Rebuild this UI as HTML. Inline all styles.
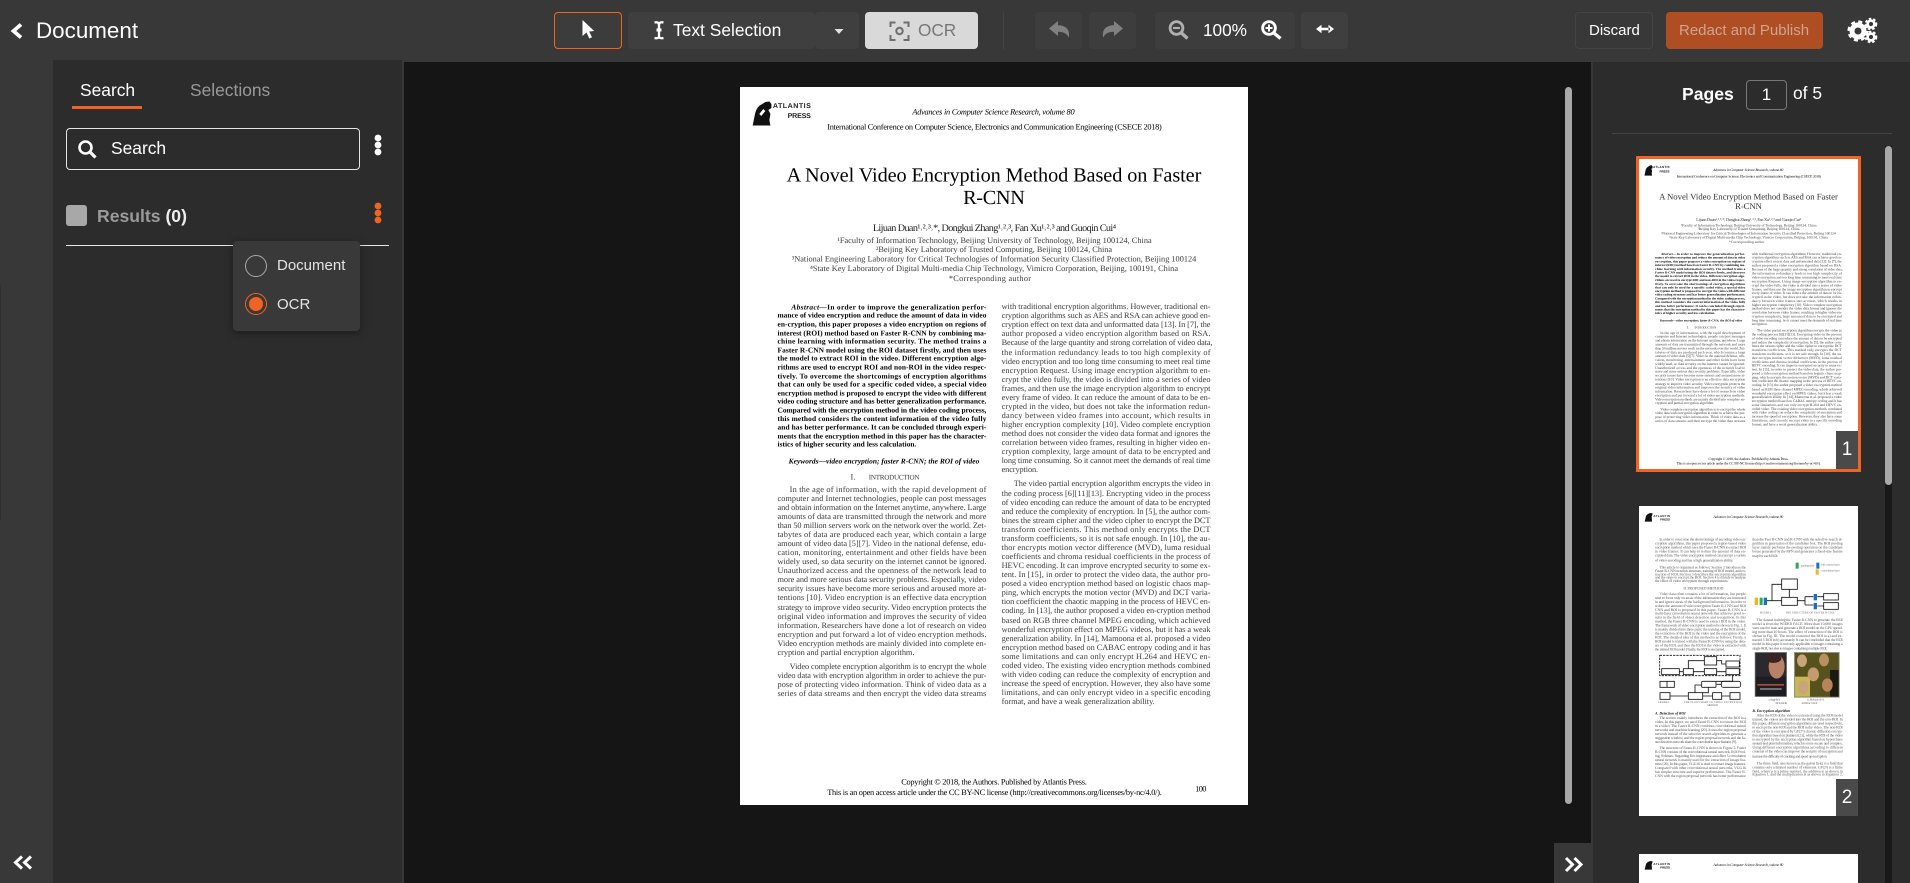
<!DOCTYPE html>
<html lang="en"><head><meta charset="utf-8"><title>Document</title>
<style>
html,body{margin:0;padding:0;width:1910px;height:883px;overflow:hidden;background:#383838;font-family:"Liberation Sans",Arial,sans-serif;color:#fff}
.a{position:absolute}
.t{position:absolute;white-space:nowrap;line-height:1}
.btn{position:absolute;top:12px;height:37px;background:#3f3f3f;border-radius:4px;box-sizing:border-box}
svg{position:absolute;left:0;top:0;overflow:visible}
.pg text{font-family:"Liberation Serif",serif;font-size:8.2px;fill:#3c3c3c;text-rendering:geometricPrecision}
.pg .b text{font-weight:bold;font-size:7.3px;fill:#000}
.pg text.k{fill:#000}
.pg text.s{font-family:"Liberation Sans",sans-serif;font-weight:bold;font-size:7px;fill:#222}
.pg2 text{font-family:"Liberation Serif",serif;font-size:11.5px;fill:#555;text-rendering:geometricPrecision}
.pg2 .n{fill:#222}
.pg2 .s{font-family:"Liberation Sans",sans-serif;font-weight:bold;font-size:9px;fill:#222}
.pg2 .h{font-weight:bold;font-style:italic;fill:#111}
.fig rect{fill:#fff;stroke:#111;stroke-width:2.5}
.fig path{fill:none;stroke:#111;stroke-width:2.5}
.thumb{position:absolute;left:1639px;width:219px;background:#fff;overflow:hidden}
.thumb svg{filter:blur(.3px)}
.main svg{filter:blur(.22px)}
.badge{position:absolute;left:1836px;width:22px;background:#4a4a4a;color:#fff;font-size:19px;text-align:center}
</style></head><body>

<!-- panels -->
<div class="a" style="left:53px;top:60px;width:349px;height:823px;background:#2c2c2c"></div>
<div class="a" style="left:404px;top:62px;width:1187px;height:821px;background:#151515"></div>
<div class="a" style="left:1593px;top:62px;width:317px;height:821px;background:#2c2c2c"></div>
<div class="a" style="left:0;top:285px;width:1px;height:235px;background:#303030"></div>

<!-- header left -->
<svg width="1910" height="883" style="z-index:3;pointer-events:none">
<polyline points="21,24.5 13.5,31 21,37.5" fill="none" stroke="#fff" stroke-width="3.8"/>
<!-- arrow pointer -->
<path d="M582.5 20V36L586.5 32.5L589.3 38.5L592 37.3L589.2 31.5L594.2 31Z" fill="#fff"/>
<!-- text cursor -->
<path d="M654.5 22.5Q659 21.5 659 25V36Q659 39 654.5 38M663.5 22.5Q659 21.5 659 25V36Q659 39 663.5 38" fill="none" stroke="#fff" stroke-width="2.3"/>
<rect x="656.5" y="28.5" width="5" height="3" fill="#fff"/>
<!-- caret -->
<path d="M834.5 29H843.5L839 34Z" fill="#e0e0e0"/>
<!-- ocr -->
<path d="M890.5 27V22.5H895.5M903.5 22.5H908.5V27M908.5 35V40H903.5M895.5 40H890.5V35" fill="none" stroke="#6e6e6e" stroke-width="2"/>
<circle cx="899.5" cy="31" r="3.2" fill="none" stroke="#6e6e6e" stroke-width="2"/>
<!-- undo / redo -->
<path d="M1049 28.5L1058 21V25.3C1066 25.3 1070.5 30 1068.7 37.6C1067 33.5 1063.5 31.6 1058 31.7V36Z" fill="#808080"/>
<path d="M1123 28.5L1114 21V25.3C1106 25.3 1101.5 30 1103.3 37.6C1105 33.5 1108.5 31.6 1114 31.7V36Z" fill="#808080"/>
<!-- zoom out/in -->
<circle cx="1176.5" cy="28" r="6.4" fill="none" stroke="#b0b0b0" stroke-width="2.8"/>
<path d="M1181.5 33L1187.5 38.5" stroke="#b0b0b0" stroke-width="3.4"/>
<path d="M1173 28H1180" stroke="#b0b0b0" stroke-width="2.2"/>
<circle cx="1269" cy="28" r="6.4" fill="none" stroke="#fff" stroke-width="2.8"/>
<path d="M1274 33L1280.5 38.5" stroke="#fff" stroke-width="3.4"/>
<path d="M1265.5 28H1272.5M1269 24.5V31.5" stroke="#fff" stroke-width="2"/>
<!-- fit -->
<path d="M1320 27.8H1330V30.2H1320Z M1316 29L1321.5 24.8V33.2Z M1334 29L1328.5 24.8V33.2Z" fill="#fff"/>
<!-- gears -->
<circle cx="1858" cy="31" r="6" fill="none" stroke="#fff" stroke-width="5"/>
<circle cx="1858" cy="31" r="9.3" fill="none" stroke="#fff" stroke-width="2.6" stroke-dasharray="4 3.3"/>
<circle cx="1871" cy="24" r="3.4" fill="none" stroke="#fff" stroke-width="2.6"/>
<circle cx="1871" cy="24" r="5.4" fill="none" stroke="#fff" stroke-width="1.8" stroke-dasharray="2.6 2"/>
<circle cx="1871" cy="37" r="3.4" fill="none" stroke="#fff" stroke-width="2.6"/>
<circle cx="1871" cy="37" r="5.4" fill="none" stroke="#fff" stroke-width="1.8" stroke-dasharray="2.6 2"/>
<!-- search icon -->
<circle cx="85.5" cy="147.5" r="6" fill="none" stroke="#fff" stroke-width="2.6"/>
<path d="M90 152L95.5 157.5" stroke="#fff" stroke-width="3.2"/>
<!-- kebabs -->
<circle cx="378" cy="138" r="3.4" fill="#fff"/><circle cx="378" cy="145" r="3.4" fill="#fff"/><circle cx="378" cy="152" r="3.4" fill="#fff"/>
<circle cx="378" cy="206" r="3.4" fill="#f26322"/><circle cx="378" cy="213" r="3.4" fill="#f26322"/><circle cx="378" cy="220" r="3.4" fill="#f26322"/>
<!-- bottom chevrons -->
<path d="M22 856.5L15.5 862.5L22 868.5M31 856.5L24.5 862.5L31 868.5" fill="none" stroke="#fff" stroke-width="3"/>
<path d="M1566 858L1572.5 864.5L1566 871M1574.5 858L1581 864.5L1574.5 871" fill="none" stroke="#fff" stroke-width="3"/>
</svg>

<div class="t" style="left:36px;top:20px;font-size:22.4px">Document</div>

<!-- toolbar -->
<div class="btn" style="left:554px;width:68px;border:1px solid #f26322;background:#3c3c3c"></div>
<div class="btn" style="left:628px;width:187px"></div>
<div class="t" style="left:673px;top:22px;font-size:17.4px">Text Selection</div>
<div class="btn" style="left:815px;width:44px"></div>
<div class="btn" style="left:865px;width:113px;background:#d9d9d9"></div>
<div class="t" style="left:918px;top:22px;font-size:17.2px;color:#777">OCR</div>
<div class="a" style="left:1003px;top:12px;width:1px;height:37px;background:#444"></div>
<div class="btn" style="left:1035px;width:47px;background:#3d3d3d"></div>
<div class="btn" style="left:1089px;width:47px;background:#3d3d3d"></div>
<div class="btn" style="left:1155px;width:140px;background:#3d3d3d"></div>
<div class="t" style="left:1203px;top:22px;font-size:17.2px">100%</div>
<div class="btn" style="left:1301px;width:47px"></div>
<div class="btn" style="left:1575px;width:78px;background:transparent;border:1px solid #444"></div>
<div class="t" style="left:1589px;top:23px;font-size:15px">Discard</div>
<div class="btn" style="left:1666px;width:157px;background:#ae4e22"></div>
<div class="t" style="left:1679px;top:23px;font-size:15px;color:#cda591">Redact and Publish</div>

<!-- left panel -->
<div class="t" style="left:80px;top:82px;font-size:17.4px">Search</div>
<div class="a" style="left:72px;top:106px;width:70px;height:3px;background:#f26322"></div>
<div class="t" style="left:190px;top:82px;font-size:17.4px;color:#999">Selections</div>
<div class="a" style="left:66px;top:128px;width:294px;height:42px;box-sizing:border-box;border:1px solid #e4e4e4;border-radius:4px"></div>
<div class="t" style="left:111px;top:140px;font-size:17.4px">Search</div>
<div class="a" style="left:66px;top:205px;width:21px;height:21px;background:#a8a8a8;border-radius:3px"></div>
<div class="t" style="left:97px;top:208px;font-size:17.6px;font-weight:bold;color:#9a9a9a">Results <span style="color:#eee">(0)</span></div>
<div class="a" style="left:66px;top:245px;width:323px;height:1px;background:#e6e6e6"></div>
<div class="a" style="left:233px;top:241px;width:127px;height:90px;background:#393939;border-radius:4px;box-shadow:0 2px 8px rgba(0,0,0,.4)"></div>
<div class="a" style="left:245px;top:255px;width:22px;height:22px;box-sizing:border-box;border:1.5px solid #aaa;border-radius:50%"></div>
<div class="t" style="left:277px;top:258px;font-size:15px;color:#e4e4e4">Document</div>
<div class="a" style="left:245px;top:293px;width:22px;height:22px;box-sizing:border-box;border:1.5px solid #f26322;border-radius:50%"></div>
<div class="a" style="left:249px;top:297px;width:14px;height:14px;background:#f26322;border-radius:50%"></div>
<div class="t" style="left:277px;top:297px;font-size:15px;color:#e4e4e4">OCR</div>

<!-- main -->
<div class="a" style="left:1565px;top:87px;width:7px;height:717px;background:#a8a8a8;border-radius:4px"></div>
<div class="a" style="left:1554px;top:843px;width:37px;height:40px;background:#383838"></div>

<div class="a pg main" style="left:740px;top:87px;width:508px;height:718px;background:#fff;overflow:hidden">
<svg width="508" height="718" viewBox="740 87 501 718" preserveAspectRatio="none">
<path d="M752.5 125.5L755 113Q757 106 762 104L765 102L769 101.5L771 104L771 108L768 110L770 114L769 120L770 125.5Z" fill="#111"/>
<path d="M759 114L763 109L765 111L761 116Z" fill="#fff"/>
<text class="s" x="772.4" y="108.2" textLength="37.5">ATLANTIS</text>
<text class="s" x="787" y="118" textLength="22.9">PRESS</text>
<text class="k" x="910" y="114.5" textLength="160" font-style="italic">Advances in Computer Science Research, volume 80</text>
<text class="k" x="826" y="129.5" textLength="330">International Conference on Computer Science, Electronics and Communication Engineering (CSECE 2018)</text>
<text class="k" x="786" y="181.5" textLength="409" style="font-size:20px">A Novel Video Encryption Method Based on Faster</text>
<text class="k" x="960" y="204" textLength="61" style="font-size:20px">R-CNN</text>
<text x="871" y="231" textLength="240" style="font-size:10px;fill:#222">Lijuan Duan¹˒²˒³˒*, Dongkui Zhang¹˒²˒³, Fan Xu¹˒²˒³ and Guoqin Cui⁴</text>
<g style="fill:#555">
<text x="836" y="243" textLength="310">¹Faculty of Information Technology, Beijing University of Technology, Beijing 100124, China</text>
<text x="874" y="252" textLength="233">²Beijing Key Laboratory of Trusted Computing, Beijing 100124, China</text>
<text x="791" y="261.7" textLength="399">³National Engineering Laboratory for Critical Technologies of Information Security Classified Protection, Beijing 100124</text>
<text x="809" y="271" textLength="363">⁴State Key Laboratory of Digital Multi-media Chip Technology, Vimicro Corporation, Beijing, 100191, China</text>
<text x="946" y="281" textLength="81">*Corresponding author</text>
</g>
<g class="b">
<text x="790.7" y="309.3" textLength="192.3"><tspan font-style="italic">Abstract—</tspan>In order to improve the generalization perfor-</text>
<text x="777" y="317.6" textLength="206">mance of video encryption and reduce the amount of data in video</text>
<text x="777" y="326.3" textLength="206">en-cryption, this paper proposes a video encryption on regions of</text>
<text x="777" y="335.3" textLength="206">interest (ROI) method based on Faster R-CNN by combining ma-</text>
<text x="777" y="343.6" textLength="206">chine learning with information security. The method trains a</text>
<text x="777" y="352.3" textLength="206">Faster R-CNN model using the ROI dataset firstly, and then uses</text>
<text x="777" y="360.6" textLength="206">the model to extract ROI in the video. Different encryption algo-</text>
<text x="777" y="369.3" textLength="206">rithms are used to encrypt ROI and non-ROI in the video respec-</text>
<text x="777" y="378.3" textLength="206">tively. To overcome the shortcomings of encryption algorithms</text>
<text x="777" y="386.6" textLength="206">that can only be used for a specific coded video, a special video</text>
<text x="777" y="395.3" textLength="206">encryption method is proposed to encrypt the video with different</text>
<text x="777" y="403.6" textLength="206">video coding structure and has better generalization performance.</text>
<text x="777" y="412.3" textLength="206">Compared with the encryption method in the video coding process,</text>
<text x="777" y="420.9" textLength="206">this method considers the content information of the video fully</text>
<text x="777" y="429.3" textLength="206">and has better performance. It can be concluded through experi-</text>
<text x="777" y="438.3" textLength="206">ments that the encryption method in this paper has the character-</text>
<text x="777" y="446.3" textLength="137">istics of higher security and less calculation.</text>
<text x="788" y="463.3" textLength="188" font-style="italic">Keywords—video encryption; faster R-CNN; the ROI of video</text>
</g>
<text x="849" y="479.3" textLength="5">I.</text>
<text x="867" y="479.3" textLength="50" style="font-size:7px">INTRODUCTION</text>
<text x="789" y="492" textLength="194">In the age of information, with the rapid development of</text>
<text x="777" y="501" textLength="206">computer and Internet technologies, people can post messages</text>
<text x="777" y="510" textLength="206">and obtain information on the Internet anytime, anywhere. Large</text>
<text x="777" y="519" textLength="206">amounts of data are transmitted through the network and more</text>
<text x="777" y="528" textLength="206">than 50 million servers work on the network over the world. Zet-</text>
<text x="777" y="537" textLength="206">tabytes of data are produced each year, which contain a large</text>
<text x="777" y="546" textLength="206">amount of video data [5][7]. Video in the national defense, edu-</text>
<text x="777" y="555" textLength="206">cation, monitoring, entertainment and other fields have been</text>
<text x="777" y="564" textLength="206">widely used, so data security on the internet cannot be ignored.</text>
<text x="777" y="573" textLength="206">Unauthorized access and the openness of the network lead to</text>
<text x="777" y="582" textLength="206">more and more serious data security problems. Especially, video</text>
<text x="777" y="591" textLength="206">security issues have become more serious and aroused more at-</text>
<text x="777" y="600" textLength="206">tentions [10]. Video encryption is an effective data encryption</text>
<text x="777" y="610" textLength="206">strategy to improve video security. Video encryption protects the</text>
<text x="777" y="619" textLength="206">original video information and improves the security of video</text>
<text x="777" y="628" textLength="206">information. Researchers have done a lot of research on video</text>
<text x="777" y="637" textLength="206">encryption and put forward a lot of video encryption methods.</text>
<text x="777" y="646" textLength="206">Video encryption methods are mainly divided into complete en-</text>
<text x="777" y="655" textLength="135">cryption and partial encryption algorithm.</text>
<text x="789" y="669" textLength="194">Video complete encryption algorithm is to encrypt the whole</text>
<text x="777" y="678" textLength="206">video data with encryption algorithm in order to achieve the pur-</text>
<text x="777" y="687" textLength="206">pose of protecting video information. Think of video data as a</text>
<text x="777" y="696" textLength="206">series of data streams and then encrypt the video data streams</text>
<text x="998" y="309" textLength="206">with traditional encryption algorithms. However, traditional en-</text>
<text x="998" y="318" textLength="206">cryption algorithms such as AES and RSA can achieve good en-</text>
<text x="998" y="327" textLength="206">cryption effect on text data and unformatted data [13]. In [7], the</text>
<text x="998" y="336" textLength="206">author proposed a video encryption algorithm based on RSA.</text>
<text x="998" y="345" textLength="208">Because of the large quantity and strong correlation of video data,</text>
<text x="998" y="355" textLength="206">the information redundancy leads to too high complexity of</text>
<text x="998" y="364" textLength="206">video encryption and too long time consuming to meet real time</text>
<text x="998" y="373" textLength="206">encryption Request. Using image encryption algorithm to en-</text>
<text x="998" y="382" textLength="206">crypt the video fully, the video is divided into a series of video</text>
<text x="998" y="391" textLength="206">frames, and then use the image encryption algorithm to encrypt</text>
<text x="998" y="400" textLength="206">every frame of video. It can reduce the amount of data to be en-</text>
<text x="998" y="409" textLength="206">crypted in the video, but does not take the information redun-</text>
<text x="998" y="418" textLength="206">dancy between video frames into account, which results in</text>
<text x="998" y="427" textLength="206">higher encryption complexity [10]. Video complete encryption</text>
<text x="998" y="436" textLength="206">method does not consider the video data format and ignores the</text>
<text x="998" y="445" textLength="206">correlation between video frames, resulting in higher video en-</text>
<text x="998" y="454" textLength="206">cryption complexity, large amount of data to be encrypted and</text>
<text x="998" y="463" textLength="206">long time consuming. So it cannot meet the demands of real time</text>
<text x="998" y="472" textLength="36">encryption.</text>
<text x="1010" y="486" textLength="194">The video partial encryption algorithm encrypts the video in</text>
<text x="998" y="496" textLength="206">the coding process [6][11][13]. Encrypting video in the process</text>
<text x="998" y="505" textLength="206">of video encoding can reduce the amount of data to be encrypted</text>
<text x="998" y="514" textLength="206">and reduce the complexity of encryption. In [5], the author com-</text>
<text x="998" y="523" textLength="206">bines the stream cipher and the video cipher to encrypt the DCT</text>
<text x="998" y="532" textLength="206">transform coefficients. This method only encrypts the DCT</text>
<text x="998" y="541" textLength="206">transform coefficients, so it is not safe enough. In [10], the au-</text>
<text x="998" y="550" textLength="206">thor encrypts motion vector difference (MVD), luma residual</text>
<text x="998" y="559" textLength="206">coefficients and chroma residual coefficients in the process of</text>
<text x="998" y="568" textLength="206">HEVC encoding. It can improve encrypted security to some ex-</text>
<text x="998" y="577" textLength="206">tent. In [15], in order to protect the video data, the author pro-</text>
<text x="998" y="586" textLength="206">posed a video encryption method based on logistic chaos map-</text>
<text x="998" y="595" textLength="206">ping, which encrypts the motion vector (MVD) and DCT varia-</text>
<text x="998" y="604" textLength="206">tion coefficient the chaotic mapping in the process of HEVC en-</text>
<text x="998" y="613" textLength="206">coding. In [13], the author proposed a video en-cryption method</text>
<text x="998" y="623" textLength="206">based on RGB three channel MPEG encoding, which achieved</text>
<text x="998" y="632" textLength="206">wonderful encryption effect on MPEG videos, but it has a weak</text>
<text x="998" y="641" textLength="206">generalization ability. In [14], Mamoona et al. proposed a video</text>
<text x="998" y="650" textLength="206">encryption method based on CABAC entropy coding and it has</text>
<text x="998" y="659" textLength="206">some limitations and can only encrypt H.264 and HEVC en-</text>
<text x="998" y="668" textLength="206">coded video. The existing video encryption methods combined</text>
<text x="998" y="677" textLength="206">with video coding can reduce the complexity of encryption and</text>
<text x="998" y="686" textLength="206">increase the speed of encryption. However, they also have some</text>
<text x="998" y="695" textLength="206">limitations, and can only encrypt video in a specific encoding</text>
<text x="998" y="704" textLength="151">format, and have a weak generalization ability.</text>
<text class="k" x="899" y="784.7" textLength="183">Copyright © 2018, the Authors. Published by Atlantis Press.</text>
<text class="k" x="826" y="795" textLength="330">This is an open access article under the CC BY-NC license (http://creativecommons.org/licenses/by-nc/4.0/).</text>
<text class="k" x="1189" y="791.7" textLength="11">100</text>
</svg>
</div>

<!-- right panel -->
<div class="t" style="left:1682px;top:86px;font-size:17.6px;font-weight:bold">Pages</div>
<div class="a" style="left:1746px;top:80px;width:41px;height:30px;box-sizing:border-box;border:1px solid #777;border-radius:4px;text-align:center;font-size:17px;line-height:28px">1</div>
<div class="t" style="left:1793px;top:85px;font-size:17.4px">of 5</div>
<div class="a" style="left:1612px;top:133px;width:280px;height:1px;background:#444"></div>
<div class="a" style="left:1885px;top:146px;width:7px;height:737px;background:#181818"></div>
<div class="a" style="left:1885px;top:146px;width:7px;height:339px;background:#a8a8a8;border-radius:4px"></div>

<div class="a" style="left:1636px;top:156px;width:225px;height:316px;background:#f26322"></div>
<div class="thumb pg" style="top:159px;height:310px">
<svg width="219" height="310" viewBox="740 87 501 718" preserveAspectRatio="none">
<path d="M752.5 125.5L755 113Q757 106 762 104L765 102L769 101.5L771 104L771 108L768 110L770 114L769 120L770 125.5Z" fill="#111"/>
<text class="s" x="772.4" y="108.2" textLength="37.5">ATLANTIS</text>
<text class="s" x="787" y="118" textLength="22.9">PRESS</text>
<text class="k" x="910" y="114.5" textLength="160" font-style="italic">Advances in Computer Science Research, volume 80</text>
<text class="k" x="826" y="129.5" textLength="330">International Conference on Computer Science, Electronics and Communication Engineering (CSECE 2018)</text>
<text x="786" y="181" textLength="409" style="font-size:20px;fill:#333">A Novel Video Encryption Method Based on Faster</text>
<text x="960" y="203" textLength="61" style="font-size:20px;fill:#333">R-CNN</text>
<text x="871" y="231" textLength="240" style="font-size:10px">Lijuan Duan¹˒²˒³˒*, Dongkui Zhang¹˒²˒³, Fan Xu¹˒²˒³ and Guoqin Cui⁴</text>
<g style="fill:#555">
<text x="836" y="243" textLength="310">¹Faculty of Information Technology, Beijing University of Technology, Beijing 100124, China</text>
<text x="874" y="252" textLength="233">²Beijing Key Laboratory of Trusted Computing, Beijing 100124, China</text>
<text x="791" y="261.7" textLength="399">³National Engineering Laboratory for Critical Technologies of Information Security Classified Protection, Beijing 100124</text>
<text x="809" y="271" textLength="363">⁴State Key Laboratory of Digital Multi-media Chip Technology, Vimicro Corporation, Beijing, 100191, China</text>
<text x="946" y="281" textLength="81">*Corresponding author</text>
</g>
<g class="b">
<text x="790.7" y="309.3" textLength="192.3"><tspan font-style="italic">Abstract—</tspan>In order to improve the generalization perfor-</text>
<text x="777" y="317.6" textLength="206">mance of video encryption and reduce the amount of data in video</text>
<text x="777" y="326.3" textLength="206">en-cryption, this paper proposes a video encryption on regions of</text>
<text x="777" y="335.3" textLength="206">interest (ROI) method based on Faster R-CNN by combining ma-</text>
<text x="777" y="343.6" textLength="206">chine learning with information security. The method trains a</text>
<text x="777" y="352.3" textLength="206">Faster R-CNN model using the ROI dataset firstly, and then uses</text>
<text x="777" y="360.6" textLength="206">the model to extract ROI in the video. Different encryption algo-</text>
<text x="777" y="369.3" textLength="206">rithms are used to encrypt ROI and non-ROI in the video respec-</text>
<text x="777" y="378.3" textLength="206">tively. To overcome the shortcomings of encryption algorithms</text>
<text x="777" y="386.6" textLength="206">that can only be used for a specific coded video, a special video</text>
<text x="777" y="395.3" textLength="206">encryption method is proposed to encrypt the video with different</text>
<text x="777" y="403.6" textLength="206">video coding structure and has better generalization performance.</text>
<text x="777" y="412.3" textLength="206">Compared with the encryption method in the video coding process,</text>
<text x="777" y="420.9" textLength="206">this method considers the content information of the video fully</text>
<text x="777" y="429.3" textLength="206">and has better performance. It can be concluded through experi-</text>
<text x="777" y="438.3" textLength="206">ments that the encryption method in this paper has the character-</text>
<text x="777" y="446.3" textLength="137">istics of higher security and less calculation.</text>
<text x="788" y="463.3" textLength="188" font-style="italic">Keywords—video encryption; faster R-CNN; the ROI of video</text>
</g>
<text x="849" y="479.3" textLength="5">I.</text>
<text x="867" y="479.3" textLength="50" style="font-size:7px">INTRODUCTION</text>
<text x="789" y="492" textLength="194">In the age of information, with the rapid development of</text>
<text x="777" y="501" textLength="206">computer and Internet technologies, people can post messages</text>
<text x="777" y="510" textLength="206">and obtain information on the Internet anytime, anywhere. Large</text>
<text x="777" y="519" textLength="206">amounts of data are transmitted through the network and more</text>
<text x="777" y="528" textLength="206">than 50 million servers work on the network over the world. Zet-</text>
<text x="777" y="537" textLength="206">tabytes of data are produced each year, which contain a large</text>
<text x="777" y="546" textLength="206">amount of video data [5][7]. Video in the national defense, edu-</text>
<text x="777" y="555" textLength="206">cation, monitoring, entertainment and other fields have been</text>
<text x="777" y="564" textLength="206">widely used, so data security on the internet cannot be ignored.</text>
<text x="777" y="573" textLength="206">Unauthorized access and the openness of the network lead to</text>
<text x="777" y="582" textLength="206">more and more serious data security problems. Especially, video</text>
<text x="777" y="591" textLength="206">security issues have become more serious and aroused more at-</text>
<text x="777" y="600" textLength="206">tentions [10]. Video encryption is an effective data encryption</text>
<text x="777" y="610" textLength="206">strategy to improve video security. Video encryption protects the</text>
<text x="777" y="619" textLength="206">original video information and improves the security of video</text>
<text x="777" y="628" textLength="206">information. Researchers have done a lot of research on video</text>
<text x="777" y="637" textLength="206">encryption and put forward a lot of video encryption methods.</text>
<text x="777" y="646" textLength="206">Video encryption methods are mainly divided into complete en-</text>
<text x="777" y="655" textLength="135">cryption and partial encryption algorithm.</text>
<text x="789" y="669" textLength="194">Video complete encryption algorithm is to encrypt the whole</text>
<text x="777" y="678" textLength="206">video data with encryption algorithm in order to achieve the pur-</text>
<text x="777" y="687" textLength="206">pose of protecting video information. Think of video data as a</text>
<text x="777" y="696" textLength="206">series of data streams and then encrypt the video data streams</text>
<text x="998" y="309" textLength="206">with traditional encryption algorithms. However, traditional en-</text>
<text x="998" y="318" textLength="206">cryption algorithms such as AES and RSA can achieve good en-</text>
<text x="998" y="327" textLength="206">cryption effect on text data and unformatted data [13]. In [7], the</text>
<text x="998" y="336" textLength="206">author proposed a video encryption algorithm based on RSA.</text>
<text x="998" y="345" textLength="208">Because of the large quantity and strong correlation of video data,</text>
<text x="998" y="355" textLength="206">the information redundancy leads to too high complexity of</text>
<text x="998" y="364" textLength="206">video encryption and too long time consuming to meet real time</text>
<text x="998" y="373" textLength="206">encryption Request. Using image encryption algorithm to en-</text>
<text x="998" y="382" textLength="206">crypt the video fully, the video is divided into a series of video</text>
<text x="998" y="391" textLength="206">frames, and then use the image encryption algorithm to encrypt</text>
<text x="998" y="400" textLength="206">every frame of video. It can reduce the amount of data to be en-</text>
<text x="998" y="409" textLength="206">crypted in the video, but does not take the information redun-</text>
<text x="998" y="418" textLength="206">dancy between video frames into account, which results in</text>
<text x="998" y="427" textLength="206">higher encryption complexity [10]. Video complete encryption</text>
<text x="998" y="436" textLength="206">method does not consider the video data format and ignores the</text>
<text x="998" y="445" textLength="206">correlation between video frames, resulting in higher video en-</text>
<text x="998" y="454" textLength="206">cryption complexity, large amount of data to be encrypted and</text>
<text x="998" y="463" textLength="206">long time consuming. So it cannot meet the demands of real time</text>
<text x="998" y="472" textLength="36">encryption.</text>
<text x="1010" y="486" textLength="194">The video partial encryption algorithm encrypts the video in</text>
<text x="998" y="496" textLength="206">the coding process [6][11][13]. Encrypting video in the process</text>
<text x="998" y="505" textLength="206">of video encoding can reduce the amount of data to be encrypted</text>
<text x="998" y="514" textLength="206">and reduce the complexity of encryption. In [5], the author com-</text>
<text x="998" y="523" textLength="206">bines the stream cipher and the video cipher to encrypt the DCT</text>
<text x="998" y="532" textLength="206">transform coefficients. This method only encrypts the DCT</text>
<text x="998" y="541" textLength="206">transform coefficients, so it is not safe enough. In [10], the au-</text>
<text x="998" y="550" textLength="206">thor encrypts motion vector difference (MVD), luma residual</text>
<text x="998" y="559" textLength="206">coefficients and chroma residual coefficients in the process of</text>
<text x="998" y="568" textLength="206">HEVC encoding. It can improve encrypted security to some ex-</text>
<text x="998" y="577" textLength="206">tent. In [15], in order to protect the video data, the author pro-</text>
<text x="998" y="586" textLength="206">posed a video encryption method based on logistic chaos map-</text>
<text x="998" y="595" textLength="206">ping, which encrypts the motion vector (MVD) and DCT varia-</text>
<text x="998" y="604" textLength="206">tion coefficient the chaotic mapping in the process of HEVC en-</text>
<text x="998" y="613" textLength="206">coding. In [13], the author proposed a video en-cryption method</text>
<text x="998" y="623" textLength="206">based on RGB three channel MPEG encoding, which achieved</text>
<text x="998" y="632" textLength="206">wonderful encryption effect on MPEG videos, but it has a weak</text>
<text x="998" y="641" textLength="206">generalization ability. In [14], Mamoona et al. proposed a video</text>
<text x="998" y="650" textLength="206">encryption method based on CABAC entropy coding and it has</text>
<text x="998" y="659" textLength="206">some limitations and can only encrypt H.264 and HEVC en-</text>
<text x="998" y="668" textLength="206">coded video. The existing video encryption methods combined</text>
<text x="998" y="677" textLength="206">with video coding can reduce the complexity of encryption and</text>
<text x="998" y="686" textLength="206">increase the speed of encryption. However, they also have some</text>
<text x="998" y="695" textLength="206">limitations, and can only encrypt video in a specific encoding</text>
<text x="998" y="704" textLength="151">format, and have a weak generalization ability.</text>
<text class="k" x="899" y="784.7" textLength="183">Copyright © 2018, the Authors. Published by Atlantis Press.</text>
<text class="k" x="826" y="795" textLength="330">This is an open access article under the CC BY-NC license (http://creativecommons.org/licenses/by-nc/4.0/).</text>
</svg>
</div>
<div class="badge" style="top:431px;height:38px;line-height:38px">1</div>

<div class="thumb pg2" style="top:506px;height:310px">
<svg width="219" height="310" viewBox="57 48 657 930" preserveAspectRatio="none">
<path d="M74 95L78 78Q82 71 92 69L98 70L95 80L96 95Z" fill="#111"/>
<text class="s" x="100" y="81" textLength="50">ATLANTIS</text>
<text class="s" x="120" y="92" textLength="30">PRESS</text>
<text class="n" x="280" y="84" textLength="210" font-style="italic">Advances in Computer Science Research, volume 80</text>

<text x="118" y="151" textLength="260">In order to overcome the shortcomings of encoding video en-</text>
<text x="105" y="163" textLength="273">cryption algorithms, this paper proposed a region-based video</text>
<text x="105" y="175" textLength="273">encryption method which uses the Faster R-CNN to extract ROI</text>
<text x="105" y="187" textLength="273">in video frames. It can help to reduce the amount of data en-</text>
<text x="105" y="199" textLength="273">crypted data. The video encryption method can encrypt a variety</text>
<text x="105" y="214" textLength="235">of video encoding and has a high generalization ability.</text>
<text x="118" y="236" textLength="260">This article is organized as follows: Section 2 introduces the</text>
<text x="105" y="246" textLength="273">Faster R-CNN network structure, training of ROI model, and ex-</text>
<text x="105" y="256" textLength="273">traction of ROI. Section 3 describes the encryption algorithm</text>
<text x="105" y="266" textLength="273">and the steps to encrypt the ROI. Section 4 is mainly to analyze</text>
<text x="105" y="276" textLength="220">the effect of video encryption through experiments.</text>
<text x="190" y="299" textLength="120">II.   PROPOSED METHOD</text>
<text x="118" y="315" textLength="260">Video data often contains a lot of information, but people</text>
<text x="105" y="327" textLength="273">tend to focus only on areas of the information they are interested</text>
<text x="105" y="339" textLength="273">in and ignore areas of the background information. In order to</text>
<text x="105" y="351" textLength="273">reduce the amount of video encryption Faster R-CNN and ROI</text>
<text x="105" y="363" textLength="273">CNN and ROI is proposed in this paper. Faster R-CNN is a</text>
<text x="105" y="374" textLength="273">multi-layer convolution neural network that achieves good re-</text>
<text x="105" y="386" textLength="273">sults in the field of object detection and recognition. In this</text>
<text x="105" y="398" textLength="273">method, the Faster R-CNN is used to extract ROI in the video.</text>
<text x="105" y="410" textLength="273">The framework of video encryption method is shown in Fig. 1. It</text>
<text x="105" y="422" textLength="273">is mainly divided into three parts: the training of the ROI model,</text>
<text x="105" y="434" textLength="273">the extraction of the ROI in the video and the encryption of the</text>
<text x="105" y="446" textLength="273">ROI. The detailed idea of this method is as follows: Firstly, a</text>
<text x="105" y="458" textLength="273">ROI model is trained with the Faster R-CNN by using the data-</text>
<text x="105" y="470" textLength="273">set of the ROI, and then the ROI in the video is extracted with</text>
<text x="105" y="482" textLength="210">the trained ROI model. Finally, the ROI is encrypted.</text>

<g class="fig">
<path d="M119 496H360V557H119Z" stroke-dasharray="7 3"/>
<rect x="125" y="536" width="53" height="18"/><rect x="190" y="536" width="30" height="18"/>
<rect x="253" y="500" width="37" height="25"/><rect x="253" y="536" width="37" height="18"/>
<rect x="318" y="513" width="40" height="18"/><rect x="318" y="536" width="40" height="18"/>
<rect x="120" y="574" width="43" height="18"/><rect x="245" y="574" width="43" height="18" rx="3"/>
<rect x="304" y="574" width="58" height="18" rx="6"/>
<rect x="120" y="608" width="30" height="20"/><rect x="205" y="608" width="43" height="20"/>
<rect x="278" y="608" width="27" height="20"/><rect x="330" y="608" width="30" height="20"/>
<path d="M178 545H190M220 545H253M205 536V512H253M290 545H318M290 512H305V522H318M338 554V574H288M265 592V608H248M150 618H205M248 618H278M305 618H330M225 608V585H245M290 583H304M141 592V574"/>
</g>
<text x="115" y="639" textLength="35" style="font-size:8px">FIGURE 1.</text>
<text x="192" y="639" textLength="175" style="font-size:8px">THE FLOWCHART OF VIDEO ENCRYPTION</text>
<text x="262" y="648" textLength="32" style="font-size:8px">METHOD</text>
<text class="h" x="105" y="673" textLength="92">A. Detection of ROI</text>
<text x="118" y="687" textLength="260">The section mainly introduces the extraction of the ROI in a</text>
<text x="105" y="699" textLength="273">video. In this paper, we used Faster R-CNN to extract the ROI</text>
<text x="105" y="711" textLength="273">in a video. The Faster R-CNN combines convolutional neural</text>
<text x="105" y="723" textLength="273">networks and machine learning [20]. It uses the region proposal</text>
<text x="105" y="735" textLength="273">network instead of the selective search algorithm to generate a</text>
<text x="105" y="747" textLength="273">suggestion window, and the region proposal network and the fa-</text>
<text x="105" y="759" textLength="245">ster detection network share the convolution layer features [9].</text>
<text x="118" y="777" textLength="260">The structure of Faster R-CNN is shown in Figure 2. Faster</text>
<text x="105" y="789" textLength="273">R-CNN consists of the convolutional neural network, ROI Pool-</text>
<text x="105" y="801" textLength="273">ing, Softmax. Regarding five importance and effect 5 convolution</text>
<text x="105" y="813" textLength="273">neural network is mainly used for the extraction of image fea-</text>
<text x="105" y="825" textLength="273">tures [20]. In this paper, VGG16 is used to extract image features.</text>
<text x="105" y="837" textLength="273">Compared with other convolutional neural networks, VGG16</text>
<text x="105" y="849" textLength="273">has simpler structure and superior performance. The Faster R-</text>
<text x="105" y="861" textLength="273">CNN with the region proposal network has better performance</text>

<text x="397" y="151" textLength="271">than the Fast R-CNN and R-CNN with the selective search al-</text>
<text x="397" y="163" textLength="271">gorithm in generation of the candidate box. The ROI pooling</text>
<text x="397" y="175" textLength="271">layer mainly performs the pooling operation on the candidate</text>
<text x="397" y="187" textLength="271">boxes generated by the RPN and generates a fixed-size feature</text>
<text x="397" y="201" textLength="78">map for each ROI.</text>

<rect x="527" y="218" width="9" height="18" fill="#2eaa55"/>
<text x="543" y="229" textLength="40" style="font-size:8px">pooling layer</text>
<rect x="589" y="218" width="9" height="18" fill="#1670c8"/>
<text x="604" y="226" textLength="55" style="font-size:8px">full connect layer</text>
<rect x="587" y="238" width="9" height="16" fill="#f2b61c"/>
<text x="604" y="245" textLength="55" style="font-size:8px">convolution layer</text>
<g class="fig">
<rect x="485" y="267" width="47" height="31"/><rect x="485" y="322" width="47" height="24"/>
<rect x="611" y="311" width="44" height="19"/><rect x="611" y="338" width="44" height="20"/>
<path d="M440 332H485M456 332V283H485M508 298V322M532 332H555M555 320V345M555 320H580M555 345H580M592 320H611M592 348H611" stroke-width="3"/>
</g>
<rect x="404" y="323" width="10" height="22" fill="#f2b61c"/><rect x="419" y="323" width="9" height="22" fill="#2eaa55"/><rect x="431" y="323" width="10" height="22" fill="#1670c8"/>
<rect x="581" y="312" width="10" height="19" fill="#1670c8"/><rect x="581" y="339" width="10" height="19" fill="#1670c8"/>
<text x="420" y="371" textLength="35" style="font-size:8px">FIGURE 2.</text>
<text x="497" y="371" textLength="145" style="font-size:8px">THE STRUCTURE OF FASTER R-CNN</text>

<text x="410" y="393" textLength="258">The dataset training the Faster R-CNN to generate the ROI</text>
<text x="397" y="405" textLength="271">model is from the WIDER FACE. More than 10,000 images</text>
<text x="397" y="417" textLength="271">were used to train and generate a ROI model on the GPU spend-</text>
<text x="397" y="429" textLength="271">ing more than 10 hours. The effect of extraction of the ROI is</text>
<text x="397" y="441" textLength="271">shown in Fig. III. The model extracted the ROI in a) and ex-</text>
<text x="397" y="453" textLength="271">tracted 5 ROI in b) accurately. It can be concluded that the ROI</text>
<text x="397" y="465" textLength="271">model in this paper is not only applicable to images containing a</text>
<text x="397" y="478" textLength="225">single ROI, but also to images containing multiple ROI.</text>

<rect x="405" y="487" width="95" height="133" fill="#2a2a2e" stroke="#999" stroke-width="2"/>
<rect x="407" y="560" width="91" height="58" fill="#1d1d22"/>
<ellipse cx="470" cy="530" rx="24" ry="36" fill="#b88168"/>
<ellipse cx="460" cy="505" rx="24" ry="14" fill="#3a2420"/>
<rect x="412" y="582" width="80" height="5" fill="#aa4a3a"/><rect x="420" y="595" width="65" height="4" fill="#999"/>
<rect x="523" y="487" width="135" height="135" fill="#8a8a30" stroke="#999" stroke-width="2"/>
<rect x="525" y="489" width="131" height="131" fill="#56521e"/>
<rect x="525" y="560" width="45" height="60" fill="#c8b855"/><rect x="630" y="540" width="26" height="80" fill="#1c1a10"/>
<ellipse cx="546" cy="512" rx="15" ry="19" fill="#caa47a"/><ellipse cx="612" cy="510" rx="15" ry="19" fill="#ba905f"/>
<ellipse cx="580" cy="553" rx="17" ry="21" fill="#c49a6e"/><ellipse cx="550" cy="592" rx="16" ry="20" fill="#caa47a"/>
<ellipse cx="622" cy="585" rx="16" ry="20" fill="#b8845a"/>
<text x="445" y="631" textLength="35" style="font-size:8px">a. Single ROI</text>
<text x="562" y="631" textLength="50" style="font-size:8px">b. Multiple ROI</text>
<text x="467" y="642" textLength="35" style="font-size:8px">FIGURE III.</text>
<text x="545" y="642" textLength="47" style="font-size:8px">EXTRACT ROI</text>
<text class="h" x="397" y="666" textLength="113">B. Encryption algorithm</text>
<text x="410" y="680" textLength="258">After the ROI of the video is extracted using the ROI model</text>
<text x="397" y="692" textLength="271">trained, the videos are divided into the ROI and the non-ROI. In</text>
<text x="397" y="704" textLength="271">this paper, different encryption algorithms are used respectively,</text>
<text x="397" y="716" textLength="271">to encrypt the non-ROI and the ROI in the video. The non-ROI</text>
<text x="397" y="728" textLength="271">of the video is encrypted by GF(2⁸) chaotic diffusion encryp-</text>
<text x="397" y="740" textLength="271">tion algorithm based on plaintext [21], while the ROI of the video</text>
<text x="397" y="752" textLength="271">is encrypted by the encryption algorithm based on hyperchaos</text>
<text x="397" y="764" textLength="271">system and pixel information, which is more secure and complex.</text>
<text x="397" y="776" textLength="271">Using different encryption algorithms according to different</text>
<text x="397" y="788" textLength="271">contents of the video can improve the security of encryption and</text>
<text x="397" y="802" textLength="225">increase the difficulty of cracking and speed up encryption.</text>
<text x="410" y="824" textLength="258">The finite field, also known as the galois field, is a field that</text>
<text x="397" y="836" textLength="271">contains only a limited number of elements. GF(2ⁿ) is a finite</text>
<text x="397" y="848" textLength="271">field, where p is a prime number, the addition is as shown in</text>
<text x="397" y="856" textLength="271">Equation 1, and the multiplication is as shown in Equation 2.</text>
</svg>
</div>
<div class="badge" style="top:779px;height:37px;line-height:37px">2</div>

<div class="thumb pg2" style="top:854px;height:29px">
<svg width="219" height="29" viewBox="57 48 657 87" preserveAspectRatio="none">
<path d="M74 95L78 78Q82 71 92 69L98 70L95 80L96 95Z" fill="#111"/>
<text class="s" x="100" y="81" textLength="50">ATLANTIS</text>
<text class="s" x="120" y="92" textLength="30">PRESS</text>
<text class="n" x="280" y="84" textLength="210" font-style="italic">Advances in Computer Science Research, volume 80</text>
</svg>
</div>
</body></html>
